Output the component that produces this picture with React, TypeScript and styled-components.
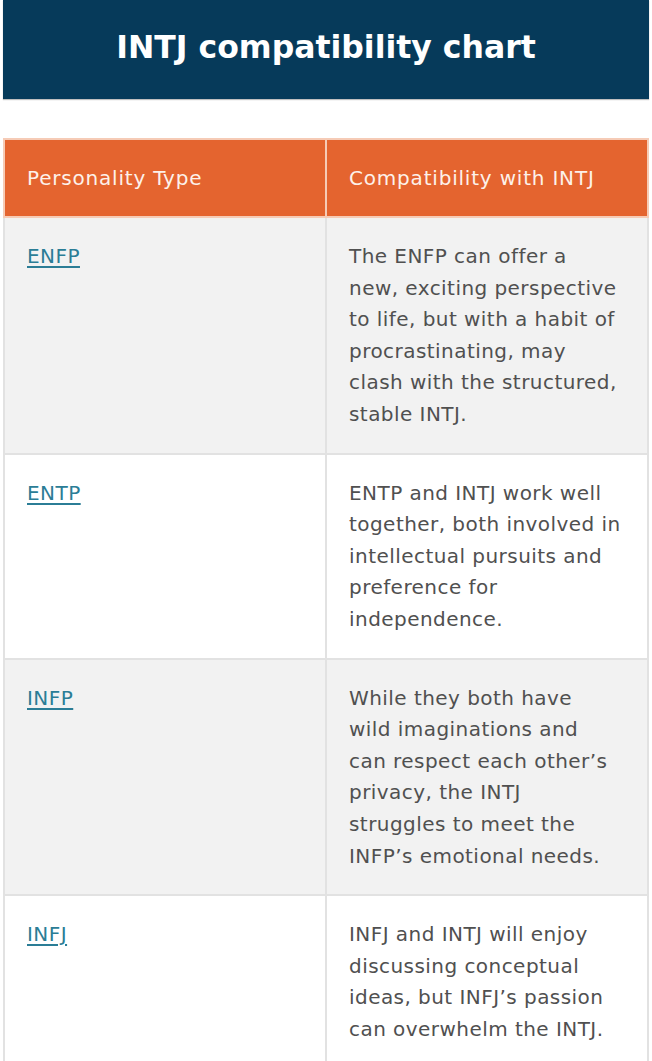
import React from 'react';
import styled, { createGlobalStyle } from 'styled-components';

const GlobalStyle = createGlobalStyle`
  html, body {
    margin: 0;
    padding: 0;
    background: #ffffff;
  }
  body {
    font-family: 'DejaVu Sans', 'Liberation Sans', sans-serif;
  }
`;

interface IRow {
  type: string;
  lines: string[];
}

// lines kept as in the original so the wrap matches
const rows: IRow[] = [
  {
    type: 'ENFP',
    lines: [
      'The ENFP can offer a',
      'new, exciting perspective',
      'to life, but with a habit of',
      'procrastinating, may',
      'clash with the structured,',
      'stable INTJ.',
    ],
  },
  {
    type: 'ENTP',
    lines: [
      'ENTP and INTJ work well',
      'together, both involved in',
      'intellectual pursuits and',
      'preference for',
      'independence.',
    ],
  },
  {
    type: 'INFP',
    lines: [
      'While they both have',
      'wild imaginations and',
      'can respect each other\u2019s',
      'privacy, the INTJ',
      'struggles to meet the',
      'INFP\u2019s emotional needs.',
    ],
  },
  {
    type: 'INFJ',
    lines: [
      'INFJ and INTJ will enjoy',
      'discussing conceptual',
      'ideas, but INFJ\u2019s passion',
      'can overwhelm the INTJ.',
    ],
  },
];

const App: React.FC = () => {
  return (
    <SPage>
      <GlobalStyle />
      <STitleBar>
        <h1 className="title">INTJ compatibility chart</h1>
      </STitleBar>
      <STable>
        <thead>
          <tr>
            <SHeadCell>Personality Type</SHeadCell>
            <SHeadCell>Compatibility with INTJ</SHeadCell>
          </tr>
        </thead>
        <tbody>
          {rows.map((row, i) => (
            <SRow key={row.type} $striped={i % 2 === 0}>
              <SCell>
                <STypeLink href="#">{row.type}</STypeLink>
              </SCell>
              <SCell>
                {row.lines.map((line, j) => (
                  <React.Fragment key={j}>
                    {j > 0 && <br />}
                    {line}
                  </React.Fragment>
                ))}
              </SCell>
            </SRow>
          ))}
        </tbody>
      </STable>
    </SPage>
  );
};

export default App;

const SPage = styled.main`
  width: 652px;
  padding: 0 3px;
  box-sizing: border-box;
`;

const STitleBar = styled.header`
  height: 99px;
  background: #063a5a;
  display: flex;
  align-items: center;
  justify-content: center;
  box-shadow: 0 1px 1px rgba(0, 0, 0, 0.25);
  .title {
    margin: 0;
    color: #ffffff;
    font-family: 'DejaVu Sans', 'Liberation Sans', sans-serif;
    font-weight: 700;
    font-size: 31.5px;
    padding-bottom: 6px;
  }
`;

const STable = styled.table`
  width: 100%;
  margin-top: 39px;
  border-collapse: collapse;
  table-layout: fixed;
  border: 2px solid #e4e4e4;
`;

const SHeadCell = styled.th`
  width: 50%;
  height: 76px;
  padding: 0 22px;
  background: #e4642f;
  border: 2px solid #f6cbb6;
  color: #fdf1ea;
  font-weight: 400;
  font-size: 20px;
  letter-spacing: 0.8px;
  text-align: left;
  vertical-align: middle;
  white-space: nowrap;
`;

const SRow = styled.tr<{ $striped: boolean }>`
  background: ${(props) => (props.$striped ? '#f2f2f2' : '#ffffff')};
`;

const SCell = styled.td`
  padding: 23px 22px 22px;
  border: 2px solid #e2e2e2;
  vertical-align: top;
  color: #505050;
  font-size: 20px;
  line-height: 31.6px;
  letter-spacing: 0.45px;
  white-space: nowrap;
`;

const STypeLink = styled.a`
  color: #2b7d96;
  text-decoration: underline;
  text-underline-offset: 3px;
`;
